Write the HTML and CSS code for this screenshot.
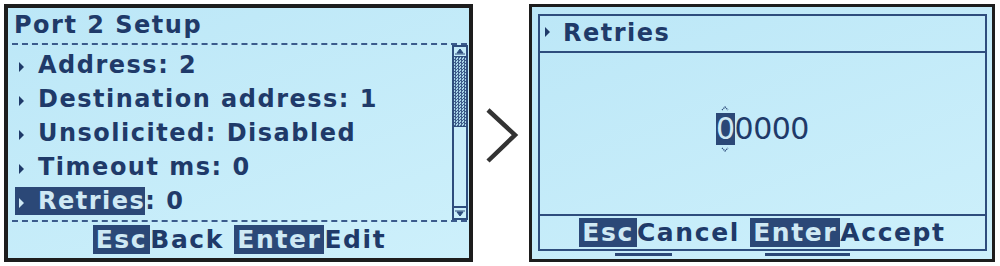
FILE: index.html
```html
<!DOCTYPE html>
<html lang="en">
<head>
<meta charset="UTF-8">
<title>Port 2 Setup</title>
<link rel="stylesheet" href="styles.css">
</head>
<body>
<div class="screens">
    <div class="lcd lcd-menu">
        <div class="lcd-title">Port 2 Setup</div>
        <div class="menu-body">
            <ul class="menu-list">
                <li><span class="item-label"><i class="marker"></i>Address</span>: 2</li>
                <li><span class="item-label"><i class="marker"></i>Destination address</span>: 1</li>
                <li><span class="item-label"><i class="marker"></i>Unsolicited</span>: Disabled</li>
                <li><span class="item-label"><i class="marker"></i>Timeout ms</span>: 0</li>
                <li><span class="item-label selected"><i class="marker"></i>Retries</span>: 0</li>
            </ul>
            <div class="scrollbar">
                <div class="scroll-btn scroll-up">
                    <svg width="10" height="6" viewBox="0 0 10 6"><path d="M5 0 L8 4 L2 4 Z M0 5 H10" fill="#2e4d7d" stroke="#2e4d7d" stroke-width="1"/></svg>
                </div>
                <div class="scroll-thumb"></div>
                <div class="scroll-track"></div>
                <div class="scroll-btn scroll-down">
                    <svg width="10" height="6" viewBox="0 0 10 6"><path d="M0 1 H10 M2 2 L8 2 L5 6 Z" fill="#2e4d7d" stroke="#2e4d7d" stroke-width="1"/></svg>
                </div>
            </div>
        </div>
        <div class="softkeys"><span class="key">Esc</span>Back <span class="key">Enter</span>Edit</div>
    </div>

    <svg class="next-arrow" width="56" height="258" viewBox="0 0 56 258">
        <polyline points="15,106 42,131 15,157" fill="none" stroke="#333" stroke-width="4.5"/>
    </svg>

    <div class="lcd lcd-edit">
        <div class="edit-frame">
            <div class="edit-title"><i class="marker"></i>Retries</div>
            <div class="edit-body">
                <div class="digits"><span class="cursor">0<svg class="caret caret-up" width="8" height="5" viewBox="0 0 8 5"><path d="M1 4 L4 1 L7 4" fill="none" stroke="#2e4d7d" stroke-width="1.3" stroke-dasharray="1.2 0.8"/></svg><svg class="caret caret-down" width="8" height="5" viewBox="0 0 8 5"><path d="M1 1 L4 4 L7 1" fill="none" stroke="#2e4d7d" stroke-width="1.3" stroke-dasharray="1.2 0.8"/></svg></span>0000</div>
            </div>
            <div class="softkeys"><span class="key">Esc</span>Cancel <span class="key">Enter</span>Accept</div>
        </div>
        <div class="key-marks"><span class="mark-esc"></span><span class="mark-enter"></span></div>
    </div>
</div>
</body>
</html>
```

FILE: styles.css
```css
body {
    margin: 0;
    padding: 0;
    background: #fff;
    font-family: "DejaVu Sans", Verdana, sans-serif;
}
.screens {
    display: flex;
    align-items: flex-start;
    padding: 4px 0 0 4px;
}
.lcd {
    box-sizing: border-box;
    height: 258px;
    background: linear-gradient(160deg, #bce7f7, #cdf0fb);
    color: #1f3a69;
    font-size: 24px;
    font-weight: bold;
    letter-spacing: 1.5px;
    display: flex;
    flex-direction: column;
}
.lcd-menu {
    width: 469px;
    border: 4px solid #1d1d1d;
}
.lcd-edit {
    width: 466px;
    border: 3px solid #1d1d1d;
}
.lcd-title {
    height: 35px;
    line-height: 35px;
    margin: 0 2px 0 4px;
    padding-left: 2px;
    border-bottom: 2px dashed #3b5b8c;
    white-space: nowrap;
}
.menu-body {
    display: flex;
    height: 175px;
}
.menu-list {
    flex: 1;
    list-style: none;
    margin: 0;
    padding: 3px 0 0 7px;
}
.menu-list li {
    line-height: 34px;
    white-space: nowrap;
}
.marker {
    display: inline-block;
    width: 0;
    height: 0;
    border-left: 5px solid currentColor;
    border-top: 5px solid transparent;
    border-bottom: 5px solid transparent;
    margin: 0 14px 0 4px;
    vertical-align: 1px;
}
.selected {
    background: #2b4877;
    color: #cfe9f4;
}
.scrollbar {
    box-sizing: border-box;
    width: 16px;
    margin-right: 1px;
    border: 2px solid #2e4d7d;
    display: flex;
    flex-direction: column;
}
.scroll-btn {
    display: flex;
    align-items: center;
    justify-content: center;
}
.scroll-up {
    height: 9px;
    border-bottom: 1px solid #2e4d7d;
}
.scroll-down {
    height: 10px;
    border-top: 2px solid #2e4d7d;
}
.scroll-thumb {
    height: 69px;
    background: repeating-conic-gradient(#3d5c8a 0 25%, #a8d4e8 0 50%) 0 0 / 3px 3px;
    border-bottom: 1px solid #2e4d7d;
}
.scroll-track {
    flex: 1;
}
.softkeys {
    text-align: center;
    font-size: 25px;
    letter-spacing: 1.6px;
    white-space: nowrap;
}
.lcd-menu .softkeys {
    height: 36px;
    line-height: 36px;
    margin: 0 2px 0 4px;
    border-top: 2px dashed #3b5b8c;
}
.key {
    background: #2b4877;
    color: #cfe9f4;
    padding: 0 3px;
}
.next-arrow {
    flex: none;
}
.edit-frame {
    box-sizing: border-box;
    height: 237px;
    margin: 7px 5px 0 6px;
    border: 2px solid #2e4d7d;
    display: flex;
    flex-direction: column;
}
.edit-title {
    height: 35px;
    line-height: 35px;
    padding-left: 5px;
    border-bottom: 2px solid #2e4d7d;
    flex: none;
}
.edit-title .marker {
    margin: 0 13px 0 0;
    vertical-align: 4px;
}
.edit-body {
    flex: 1;
    display: flex;
    align-items: center;
    justify-content: center;
    padding-bottom: 9px;
}
.digits {
    font-size: 30px;
    font-weight: normal;
    letter-spacing: -0.5px;
    line-height: 32px;
}
.cursor {
    position: relative;
    display: inline-block;
    background: #2b4877;
    color: #cfe9f4;
}
.caret {
    position: absolute;
    left: 50%;
    margin-left: -4px;
}
.caret-up {
    top: -7px;
}
.caret-down {
    bottom: -7px;
}
.edit-frame .softkeys {
    flex: none;
    height: 33px;
    line-height: 33px;
    border-top: 2px solid #2e4d7d;
}
.key-marks {
    display: flex;
    gap: 93px;
    margin-top: 2px;
    padding-left: 83px;
}
.key-marks span {
    height: 3px;
    background: #2b4877;
}
.mark-esc {
    width: 57px;
}
.mark-enter {
    width: 85px;
}
```
